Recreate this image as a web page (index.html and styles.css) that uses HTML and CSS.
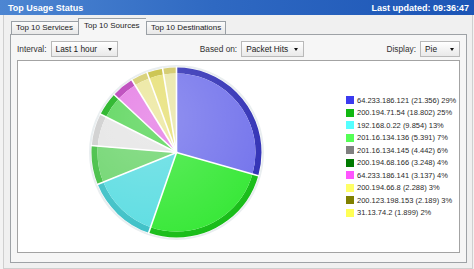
FILE: index.html
```html
<!DOCTYPE html>
<html>
<head>
<meta charset="utf-8">
<link rel="stylesheet" href="styles.css">
</head>
<body>
<div class="titlebar">
  <span>Top Usage Status</span>
  <span>Last updated: 09:36:47</span>
</div>
<div class="frame">
  <div class="tabs">
    <div class="tab">Top 10 Services</div>
    <div class="tab sel">Top 10 Sources</div>
    <div class="tab">Top 10 Destinations</div>
  </div>
  <div class="panel">
    <div class="controls">
      <div class="group"><span class="lbl">Interval:</span><div class="select w-interval">Last 1 hour<i class="arrow"></i></div></div>
      <div class="group"><span class="lbl">Based on:</span><div class="select w-based">Packet Hits<i class="arrow"></i></div></div>
      <div class="group"><span class="lbl">Display:</span><div class="select w-display">Pie<i class="arrow"></i></div></div>
    </div>
    <div class="chart">
      <svg class="pie" width="320" height="191" viewBox="0 0 320 191">
        <defs>
          <radialGradient id="gloss" cx="0.35" cy="0.3" r="0.75">
            <stop offset="0" stop-color="#ffffff" stop-opacity="0.22"/>
            <stop offset="1" stop-color="#ffffff" stop-opacity="0"/>
          </radialGradient>
        </defs>
        <circle cx="158.5" cy="91.5" r="86.5" fill="none" stroke="#e9eef0" stroke-width="2"/>
        <g transform="rotate(-90 158.5 91.5)" fill="none">
          <g class="rim" stroke-width="6">
            <circle cx="158.5" cy="91.5" r="82" pathLength="360" stroke="#3131b5" stroke-dasharray="105.89 400" stroke-dashoffset="0"/>
            <circle cx="158.5" cy="91.5" r="82" pathLength="360" stroke="#19bd19" stroke-dasharray="93.23 400" stroke-dashoffset="-105.89"/>
            <circle cx="158.5" cy="91.5" r="82" pathLength="360" stroke="#3cc0c6" stroke-dasharray="48.86 400" stroke-dashoffset="-199.12"/>
            <circle cx="158.5" cy="91.5" r="82" pathLength="360" stroke="#3fbd3f" stroke-dasharray="26.73 400" stroke-dashoffset="-247.98"/>
            <circle cx="158.5" cy="91.5" r="82" pathLength="360" stroke="#cdcdcd" stroke-dasharray="22.02 400" stroke-dashoffset="-274.71"/>
            <circle cx="158.5" cy="91.5" r="82" pathLength="360" stroke="#12ad12" stroke-dasharray="16.10 400" stroke-dashoffset="-296.73"/>
            <circle cx="158.5" cy="91.5" r="82" pathLength="360" stroke="#b536b5" stroke-dasharray="15.55 400" stroke-dashoffset="-312.83"/>
            <circle cx="158.5" cy="91.5" r="82" pathLength="360" stroke="#d3cb68" stroke-dasharray="11.34 400" stroke-dashoffset="-328.38"/>
            <circle cx="158.5" cy="91.5" r="82" pathLength="360" stroke="#c5bd38" stroke-dasharray="10.85 400" stroke-dashoffset="-339.72"/>
            <circle cx="158.5" cy="91.5" r="82" pathLength="360" stroke="#d0c660" stroke-dasharray="9.43 400" stroke-dashoffset="-350.57"/>
          </g>
          <g class="fill" stroke-width="79">
            <circle cx="158.5" cy="91.5" r="39.5" pathLength="360" stroke="#7474ec" stroke-dasharray="105.89 400" stroke-dashoffset="0"/>
            <circle cx="158.5" cy="91.5" r="39.5" pathLength="360" stroke="#38e838" stroke-dasharray="93.23 400" stroke-dashoffset="-105.89"/>
            <circle cx="158.5" cy="91.5" r="39.5" pathLength="360" stroke="#5ddde2" stroke-dasharray="48.86 400" stroke-dashoffset="-199.12"/>
            <circle cx="158.5" cy="91.5" r="39.5" pathLength="360" stroke="#6ed56e" stroke-dasharray="26.73 400" stroke-dashoffset="-247.98"/>
            <circle cx="158.5" cy="91.5" r="39.5" pathLength="360" stroke="#e5e5e5" stroke-dasharray="22.02 400" stroke-dashoffset="-274.71"/>
            <circle cx="158.5" cy="91.5" r="39.5" pathLength="360" stroke="#55d455" stroke-dasharray="16.10 400" stroke-dashoffset="-296.73"/>
            <circle cx="158.5" cy="91.5" r="39.5" pathLength="360" stroke="#e47ae4" stroke-dasharray="15.55 400" stroke-dashoffset="-312.83"/>
            <circle cx="158.5" cy="91.5" r="39.5" pathLength="360" stroke="#ebe69a" stroke-dasharray="11.34 400" stroke-dashoffset="-328.38"/>
            <circle cx="158.5" cy="91.5" r="39.5" pathLength="360" stroke="#e6df72" stroke-dasharray="10.85 400" stroke-dashoffset="-339.72"/>
            <circle cx="158.5" cy="91.5" r="39.5" pathLength="360" stroke="#e9e6a6" stroke-dasharray="9.43 400" stroke-dashoffset="-350.57"/>
          </g>
        </g>
        <circle cx="158.5" cy="91.5" r="85" fill="url(#gloss)"/>
        <g stroke="#ffffff" stroke-width="1.6">
          <line x1="158.5" y1="91.5" x2="158.5" y2="5.5"/>
          <line x1="158.5" y1="91.5" x2="158.5" y2="5.5" transform="rotate(105.89 158.5 91.5)"/>
          <line x1="158.5" y1="91.5" x2="158.5" y2="5.5" transform="rotate(199.12 158.5 91.5)"/>
          <line x1="158.5" y1="91.5" x2="158.5" y2="5.5" transform="rotate(247.98 158.5 91.5)"/>
          <line x1="158.5" y1="91.5" x2="158.5" y2="5.5" transform="rotate(274.71 158.5 91.5)"/>
          <line x1="158.5" y1="91.5" x2="158.5" y2="5.5" transform="rotate(296.73 158.5 91.5)"/>
          <line x1="158.5" y1="91.5" x2="158.5" y2="5.5" transform="rotate(312.83 158.5 91.5)"/>
          <line x1="158.5" y1="91.5" x2="158.5" y2="5.5" transform="rotate(328.38 158.5 91.5)"/>
          <line x1="158.5" y1="91.5" x2="158.5" y2="5.5" transform="rotate(339.72 158.5 91.5)"/>
          <line x1="158.5" y1="91.5" x2="158.5" y2="5.5" transform="rotate(350.57 158.5 91.5)"/>
        </g>
      </svg>
      <ul class="legend">
        <li><i class="sw c1"></i>64.233.186.121 (21.356) 29%</li>
        <li><i class="sw c2"></i>200.194.71.54 (18.802) 25%</li>
        <li><i class="sw c3"></i>192.168.0.22 (9.854) 13%</li>
        <li><i class="sw c4"></i>201.16.134.136 (5.391) 7%</li>
        <li><i class="sw c5"></i>201.16.134.145 (4.442) 6%</li>
        <li><i class="sw c6"></i>200.194.68.166 (3.248) 4%</li>
        <li><i class="sw c7"></i>64.233.186.141 (3.137) 4%</li>
        <li><i class="sw c8"></i>200.194.66.8 (2.288) 3%</li>
        <li><i class="sw c9"></i>200.123.198.153 (2.189) 3%</li>
        <li><i class="sw c10"></i>31.13.74.2 (1.899) 2%</li>
      </ul>
    </div>
  </div>
</div>
</body>
</html>
```
FILE: styles.css
```css
* { box-sizing: border-box; }
html, body {
  margin: 0;
  padding: 0;
  width: 474px;
  height: 269px;
  overflow: hidden;
  background: #f3f3f3;
  font-family: "Liberation Sans", Arial, sans-serif;
  color: #2a2a2a;
}
.titlebar {
  height: 15px;
  display: flex;
  justify-content: space-between;
  align-items: center;
  padding: 0 5px 0 8px;
  background: linear-gradient(to right, #4d86d2 0%, #2f69c2 45%, #1c55b6 100%);
  color: #ffffff;
  font-weight: bold;
  font-size: 9px;
}
.frame {
  margin: 0 1px 0 3px;
  height: 254px;
  border-left: 1px solid #cfcfcf;
  border-right: 1px solid #cfcfcf;
  border-bottom: 1px solid #cfcfcf;
  background: #f0f0f0;
  padding: 3px 5px 0 6px;
}
.tabs {
  display: flex;
  align-items: flex-end;
  height: 16px;
  padding-left: 1px;
}
.tab {
  height: 13px;
  line-height: 12px;
  padding: 0 4px 0 4px;
  border: 1px solid #9aa0a6;
  border-bottom: none;
  border-right: none;
  background: linear-gradient(#fbfbfb, #e8e8e8);
  font-size: 8px;
  color: #222;
  white-space: nowrap;
}
.tab:last-child { border-right: 1px solid #9aa0a6; }
.tab.sel {
  position: relative;
  height: 17px;
  margin-bottom: -1px;
  line-height: 14px;
  background: #f6f6f6;
  border-right: none;
  padding: 0 5px;
  width: 68px;
}
.tab.sel + .tab { border-left: 1px solid #9aa0a6; }
.tab:first-child { width: 67px; }
.panel {
  height: 229px;
  border: 1px solid #9ea2a6;
  background: #f6f6f6;
  padding: 6px 6px 0 6px;
}
.controls {
  display: flex;
  justify-content: space-between;
  align-items: center;
  height: 16px;
  margin-bottom: 3px;
  font-size: 8.3px;
  color: #333;
}
.group {
  display: flex;
  align-items: center;
}
.lbl { margin-right: 4px; }
.lbl:first-child { padding-left: 0; }
.select {
  position: relative;
  height: 16px;
  line-height: 14px;
  padding-left: 4px;
  border: 1px solid #b9b9b9;
  background: linear-gradient(#ffffff, #e9e9e9);
  color: #222;
  white-space: nowrap;
}
.w-interval { width: 67px; }
.w-based { width: 63px; }
.w-display { width: 40px; }
.arrow {
  position: absolute;
  right: 5px;
  top: 6px;
  width: 0;
  height: 0;
  border-left: 2.5px solid transparent;
  border-right: 2.5px solid transparent;
  border-top: 3px solid #111;
}
.chart {
  display: flex;
  height: 193px;
  border: 1px solid #a3a3a3;
  background: #ffffff;
}
.pie { display: block; flex: none; }
.legend {
  list-style: none;
  margin: 33px 0 0 8px;
  padding: 0;
  font-size: 7.5px;
  color: #2a2a2a;
}
.legend li {
  display: flex;
  align-items: center;
  height: 12.5px;
  white-space: nowrap;
}
.sw {
  display: inline-block;
  width: 8px;
  height: 8px;
  margin-right: 3px;
}
.c1 { background: #3b3bef; }
.c2 { background: #12b812; }
.c3 { background: #55ffff; }
.c4 { background: #55ff55; }
.c5 { background: #808080; }
.c6 { background: #007a00; }
.c7 { background: #ff55ff; }
.c8 { background: #ffff66; }
.c9 { background: #808000; }
.c10 { background: #ffff55; }
```
